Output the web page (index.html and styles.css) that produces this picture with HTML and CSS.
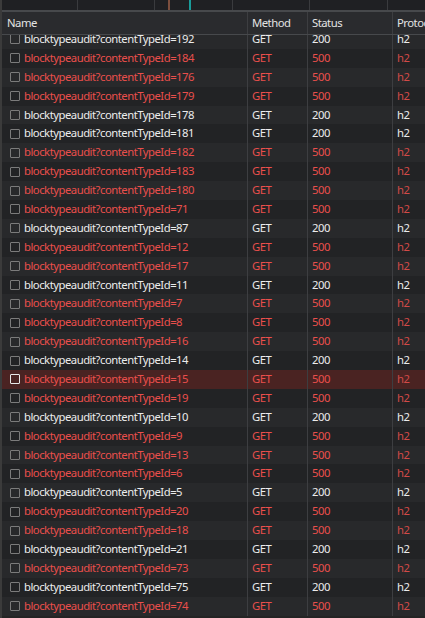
FILE: index.html
```html
<!DOCTYPE html>
<html>
<head>
<meta charset="utf-8">
<link rel="stylesheet" href="styles.css">
</head>
<body>
<div class="panel">
  <div class="overview">
    <div class="tick"></div><div class="tick"></div><div class="tick"></div><div class="tick"></div><div class="tick"></div><div class="tick"></div>
    <div class="mark mark-brown"></div>
    <div class="mark mark-teal"></div>
  </div>
  <div class="table">
    <div class="head">
      <div class="cell c-name">Name</div>
      <div class="cell c-method">Method</div>
      <div class="cell c-status">Status</div>
      <div class="cell c-proto">Protocol</div>
    </div>
    <div class="rows" id="rows"></div>
  </div>
</div>
<script src="script.js"></script>
</body>
</html>
```
FILE: script.js
```js
var data = [
  [192,200],[184,500],[176,500],[179,500],[178,200],[181,200],[182,500],[183,500],[180,500],[71,500],
  [87,200],[12,500],[17,500],[11,200],[7,500],[8,500],[16,500],[14,200],[15,500,1],[19,500],
  [10,200],[9,500],[13,500],[6,500],[5,200],[20,500],[18,500],[21,200],[73,500],[75,200],[74,500]
];
var rows = document.getElementById('rows');
data.forEach(function (d, i) {
  var r = document.createElement('div');
  r.className = 'row' + (i % 2 ? ' odd' : ' even') + (d[1] === 500 ? ' err' : '') + (d[2] ? ' sel' : '');
  r.innerHTML =
    '<div class="cell c-name"><span class="box"></span><span class="txt">blocktypeaudit?contentTypeId=' + d[0] + '</span></div>' +
    '<div class="cell c-method">GET</div>' +
    '<div class="cell c-status">' + d[1] + '</div>' +
    '<div class="cell c-proto">h2</div>';
  rows.appendChild(r);
});
```
FILE: styles.css
```css
html, body {
  margin: 0;
  padding: 0;
  background: #242424;
}
body {
  font-family: "Noto Sans", "Open Sans", sans-serif;
  font-size: 11.3px;
  letter-spacing: -0.5px;
  color: #e3e3e3;
  width: 425px;
  height: 618px;
  overflow: hidden;
}
.panel {
  width: 425px;
  height: 618px;
  overflow: hidden;
  border-left: 2px solid #3b3b3b;
  box-sizing: border-box;
}
.overview {
  position: relative;
  height: 10px;
  background: #1f2023;
  display: flex;
  border-bottom: 2px solid #47494c;
  margin-left: -2px;
}
.tick {
  flex: 0 0 77.5px;
  box-sizing: border-box;
  border-right: 1px solid #3a3b3e;
}
.mark {
  position: absolute;
  top: 0;
  bottom: 0;
  width: 2px;
}
.mark-brown { left: 168px; background: #7d4f3e; }
.mark-teal { left: 189px; background: #1a9c9a; }
.table {
  margin-left: -2px;
}
.head, .row {
  display: grid;
  grid-template-columns: 248px 60px 85px 1fr;
}
.head {
  height: 22px;
  background: #2a2b2e;
  border-bottom: 1px solid #47494c;
  position: relative;
  z-index: 1;
}
.head .cell {
  line-height: 22px;
  color: #e3e3e3;
}
.cell {
  box-sizing: border-box;
  border-right: 1px solid #3d3e41;
  padding-left: 4px;
  white-space: nowrap;
  overflow: hidden;
}
.head .c-name { padding-left: 7px; }
.c-proto { border-right: none; }
.rows {
  margin-top: -5px;
}
.row {
  height: 18.9px;
  line-height: 18.9px;
  color: #ececec;
}
.row.even { background: #28292b; }
.row.odd { background: #222325; }
.row.err { color: #ea4f4c; }
.row.sel { background: #4a2322; }
.row .c-name {
  display: flex;
  align-items: center;
  padding-left: 10px;
}
.box {
  flex: 0 0 auto;
  width: 10px;
  height: 10px;
  box-sizing: border-box;
  border: 1px solid #7b7b7b;
  border-radius: 1px;
  margin-right: 4px;
}
.row.sel .box { border-color: #e8e8e8; }
.row.err .c-proto { color: #d24a47; }
```
